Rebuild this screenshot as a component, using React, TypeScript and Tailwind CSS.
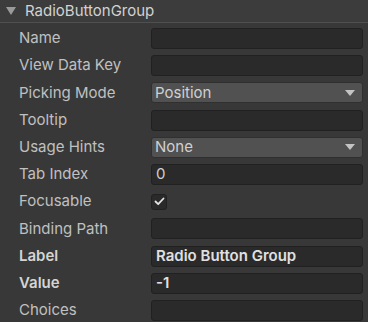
import React from 'react'

type Row =
  | { label: string; kind: 'text'; value?: string; bold?: boolean }
  | { label: string; kind: 'select'; value: string }
  | { label: string; kind: 'check'; checked: boolean }

const rows: Row[] = [
  { label: 'Name', kind: 'text' },
  { label: 'View Data Key', kind: 'text' },
  { label: 'Picking Mode', kind: 'select', value: 'Position' },
  { label: 'Tooltip', kind: 'text' },
  { label: 'Usage Hints', kind: 'select', value: 'None' },
  { label: 'Tab Index', kind: 'text', value: '0' },
  { label: 'Focusable', kind: 'check', checked: true },
  { label: 'Binding Path', kind: 'text' },
  { label: 'Label', kind: 'text', value: 'Radio Button Group', bold: true },
  { label: 'Value', kind: 'text', value: '-1', bold: true },
  { label: 'Choices', kind: 'text' },
]

function Field({ row }: { row: Row }) {
  if (row.kind === 'select') {
    return (
      <div className="flex h-[21px] w-[212px] items-center justify-between rounded-[3px] border border-[#303030] bg-[#515151] pl-[3px] pr-[7px] text-[#d0d0d0]">
        <span>{row.value}</span>
        <svg width="10" height="6" viewBox="0 0 10 6">
          <path d="M0 0 L10 0 L5 6 Z" fill="#c4c4c4" />
        </svg>
      </div>
    )
  }
  if (row.kind === 'check') {
    return (
      <div className="flex h-[21px] items-center">
        <div className="flex h-[16px] w-[16px] items-center justify-center rounded-[3px] border border-[#212121] bg-[#2a2a2a]">
          {row.checked && (
            <svg width="11" height="9" viewBox="0 0 11 9">
              <path d="M1.5 4.5 L4.2 7.2 L9.5 1.5" fill="none" stroke="#e4e4e4" strokeWidth="1.8" strokeLinecap="round" strokeLinejoin="round" />
            </svg>
          )}
        </div>
      </div>
    )
  }
  return (
    <div
      className={`flex h-[21px] w-[212px] items-center rounded-[3px] border border-[#212121] bg-[#2a2a2a] pl-[4px] ${row.bold ? 'font-semibold text-[#e0e0e0]' : 'text-[#d0d0d0]'}`}
    >
      {row.value}
    </div>
  )
}

export default function App() {
  return (
    <div
      className="h-[322px] w-[368px] overflow-hidden bg-[#383838] text-[15px]"
      style={{ fontFamily: 'Inter, "Noto Sans", sans-serif' }}
    >
      {/* Header */}
      <div className="flex h-[23px] items-center border-b border-[#4f4f4f] bg-[#3c3c3c] pl-[6px]">
        <svg width="10" height="8" viewBox="0 0 10 8" className="mr-[9px]">
          <path d="M0 0 L10 0 L5 8 Z" fill="#9a9a9a" />
        </svg>
        <span className="text-[#d2d2d2]">RadioButtonGroup</span>
      </div>

      {/* Attributes */}
      <div className="flex flex-col gap-[6.2px] pt-[5px]">
        {rows.map((row) => (
          <div key={row.label} className="flex h-[21px] items-center pr-[5px]">
            <div
              className={`w-[151px] pl-[19px] ${row.kind === 'text' && row.bold ? 'font-semibold text-[#d4d4d4]' : 'text-[#c0c0c0]'}`}
            >
              {row.label}
            </div>
            <Field row={row} />
          </div>
        ))}
      </div>
    </div>
  )
}
